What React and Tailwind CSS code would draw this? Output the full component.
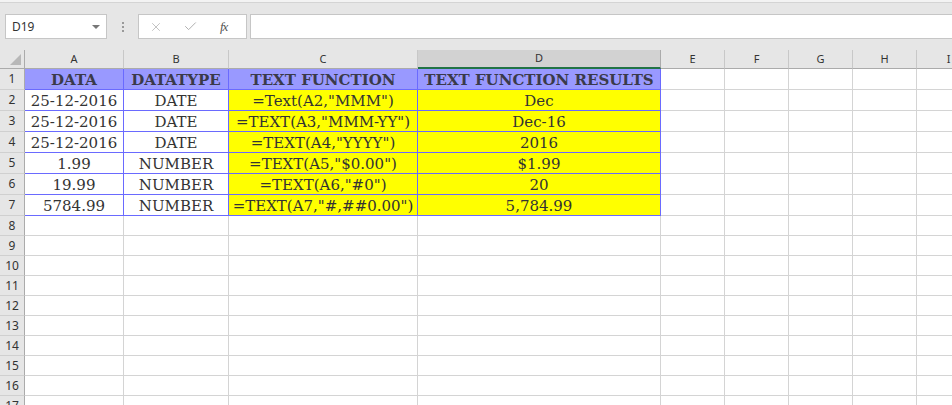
import { X, Check } from "lucide-react";

const cols = [
  { key: "A", w: "w-[99px]" },
  { key: "B", w: "w-[105px]" },
  { key: "C", w: "w-[189px]" },
  { key: "D", w: "w-[243px]" },
  { key: "E", w: "w-[64px]" },
  { key: "F", w: "w-[64px]" },
  { key: "G", w: "w-[64px]" },
  { key: "H", w: "w-[64px]" },
  { key: "I", w: "w-[64px]" },
];

const data = [
  ["DATA", "DATATYPE", "TEXT FUNCTION", "TEXT FUNCTION RESULTS"],
  ["25-12-2016", "DATE", '=Text(A2,"MMM")', "Dec"],
  ["25-12-2016", "DATE", '=TEXT(A3,"MMM-YY")', "Dec-16"],
  ["25-12-2016", "DATE", '=TEXT(A4,"YYYY")', "2016"],
  ["1.99", "NUMBER", '=TEXT(A5,"$0.00")', "$1.99"],
  ["19.99", "NUMBER", '=TEXT(A6,"#0")', "20"],
  ["5784.99", "NUMBER", '=TEXT(A7,"#,##0.00")', "5,784.99"],
];

const ui = { fontFamily: '"Noto Sans", "Open Sans", sans-serif' };
const serif = { fontFamily: 'Georgia, "DejaVu Serif", "Liberation Serif", serif' };

function FormulaBar() {
  return (
    <div className="bg-[#e6e6e6]">
      <div className="h-[3px] bg-[#f3f3f3] border-b border-[#d4d4d4]" />
      <div className="flex items-start h-[36px] pt-[11px]">
        <div className="ml-[5px] w-[102px] h-[25px] bg-white border border-[#c6c6c6] flex items-center justify-between px-[6px] text-[12px] text-[#333]" style={ui}>
          <span>D19</span>
          <span className="w-0 h-0 border-l-[4px] border-r-[4px] border-t-[4px] border-l-transparent border-r-transparent border-t-[#777]" />
        </div>
        <div className="w-[31px] h-[25px] flex flex-col items-center justify-center gap-[2px]">
          <span className="w-[2px] h-[2px] bg-[#999]" />
          <span className="w-[2px] h-[2px] bg-[#999]" />
          <span className="w-[2px] h-[2px] bg-[#999]" />
        </div>
        <div className="w-[109px] h-[25px] bg-white border border-[#c6c6c6] flex items-center">
          <X size={14} strokeWidth={1.3} className="ml-[10px] text-[#b0b0b0]" />
          <Check size={15} strokeWidth={1.6} className="ml-[20px] text-[#b0b0b0]" />
          <span className="ml-[22px] italic text-[13px] text-[#555] tracking-[-1px]" style={{ fontFamily: '"Liberation Serif", serif' }}>fx</span>
        </div>
        <div className="ml-[3px] flex-1 h-[25px] bg-white border border-[#c6c6c6] border-r-0" />
      </div>
      <div className="h-[11px]" />
    </div>
  );
}

function ColumnHeader() {
  return (
    <div className="flex h-[19px] bg-[#e6e6e6] text-[11px] text-[#333]" style={ui}>
      <div className="w-[25px] shrink-0 border-r border-b border-[#ababab] flex items-end justify-end pr-[3px] pb-[3px]">
        <svg width="11" height="11" viewBox="0 0 11 11">
          <polygon points="11,0 11,11 0,11" fill="#b8b8b8" />
        </svg>
      </div>
      {cols.map((c) =>
        c.key === "D" ? (
          <div key={c.key} className={`${c.w} shrink-0 bg-[#d2d2d2] border-r border-[#ababab] border-b-2 border-b-[#217346] flex items-center justify-center`}>
            {c.key}
          </div>
        ) : (
          <div key={c.key} className={`${c.w} shrink-0 border-r border-b border-[#ababab] border-r-[#c8c8c8] flex items-center justify-center`}>
            {c.key}
          </div>
        )
      )}
    </div>
  );
}

function Row({ n, cells }) {
  const tall = n <= 7;
  return (
    <div className={`flex ${tall ? "h-[21px]" : "h-[20px]"}`}>
      <div className="w-[25px] shrink-0 bg-[#e6e6e6] border-r border-b border-[#ababab] border-b-[#d0d0d0] text-[12px] text-[#333] flex items-center justify-center" style={ui}>
        {n}
      </div>
      {cols.map((c, i) => {
        const v = cells ? cells[i] : undefined;
        if (cells && i < 4) {
          const bg = n === 1 ? "bg-[#9999ff]" : i >= 2 ? "bg-[#ffff00]" : "bg-white";
          return (
            <div
              key={c.key}
              className={`${c.w} shrink-0 ${bg} border-r border-b border-[#6a6aff] flex items-center justify-center pt-[2px] whitespace-nowrap overflow-hidden text-[15px] leading-none ${n === 1 ? "font-bold text-[#3a3a4a]" : "text-[#333333]"}`}
              style={serif}
            >
              {v}
            </div>
          );
        }
        return <div key={c.key} className={`${c.w} shrink-0 border-r border-b border-[#d4d4d4] bg-white`} />;
      })}
    </div>
  );
}

export default function App() {
  const rows = Array.from({ length: 17 }, (_, i) => i + 1);
  return (
    <div className="w-[952px] h-[405px] overflow-hidden bg-white">
      <FormulaBar />
      <ColumnHeader />
      {rows.map((n) => (
        <Row key={n} n={n} cells={data[n - 1]} />
      ))}
    </div>
  );
}
